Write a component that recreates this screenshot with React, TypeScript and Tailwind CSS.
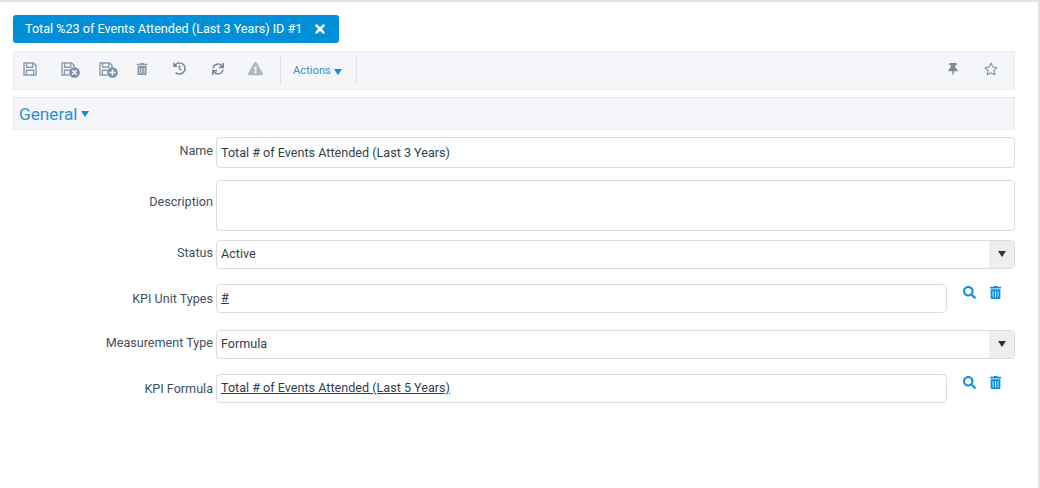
import type { JSX, ReactNode } from 'react';
import {
    FaExclamationTriangle,
    FaHistory,
    FaRegStar,
    FaSearch,
    FaSync,
    FaThumbtack,
    FaTimes,
    FaTimesCircle,
    FaPlusCircle,
    FaTrashAlt,
} from 'react-icons/fa';

function Floppy(): JSX.Element {
    return (
        <svg viewBox="0 0 14 14" className="block h-[14px] w-[14px]" fill="none" stroke="currentColor" strokeWidth="1.4">
            <path d="M1 1H10.6L13 3.4V13H1Z" />
            <path d="M3.6 1V5.2H9.8V1" />
            <path d="M3.4 13V8.2H10.6V13" />
        </svg>
    );
}

function Triangle({ className }: { className: string }): JSX.Element {
    return (
        <svg viewBox="0 0 8 6" className={`block h-[6px] w-[8px] ${className}`} fill="currentColor">
            <path d="M0 0H8L4 6Z" />
        </svg>
    );
}

function SaveBadge({ children }: { children: ReactNode }): JSX.Element {
    return (
        <span className="relative block h-[14px] w-[14px] text-[#8b9db0]">
            <Floppy />
            <span className="absolute left-[8px] top-[5px] rounded-full bg-[#f4f6fa] text-[11px] text-[#7f91a3]">{children}</span>
        </span>
    );
}

function Row({ label, top, children, className }: { label: string; top: string; children: ReactNode; className: string }): JSX.Element {
    return (
        <div className={`flex ${className}`}>
            <label className={`w-[200px] shrink-0 text-right text-[12.6px] leading-[18px] text-[#44505c] ${top}`}>{label}</label>
            <div className="ml-[3px] flex min-w-0 flex-1">{children}</div>
        </div>
    );
}

function TextBox({ value, underline, className }: { value?: string; underline?: boolean; className: string }): JSX.Element {
    return (
        <div className={`flex-1 rounded-[4px] border border-[#dcdcdc] bg-white pl-[4px] text-[12.6px] leading-[18px] text-[#333f4b] ${className}`}>
            {underline ? <span className="underline">{value}</span> : value}
        </div>
    );
}

function SelectBox({ value }: { value: string }): JSX.Element {
    return (
        <div className="flex h-[29px] flex-1 overflow-hidden rounded-[4px] border border-[#dcdcdc] bg-white">
            <div className="flex-1 pl-[4px] pt-[4px] text-[12.6px] leading-[18px] text-[#333f4b]">{value}</div>
            <div className="flex w-[25px] items-center justify-center bg-[#eeeeee] text-[#333]">
                <Triangle className="mb-[1px] text-[#333]" />
            </div>
        </div>
    );
}

function LookupBox({ value }: { value: string }): JSX.Element {
    return (
        <>
            <TextBox value={value} underline className="h-[29px] pt-[4px]" />
            <div className="flex w-[68px] shrink-0 items-start pl-[16px] pt-[1px] text-[#0f8fd8]">
                <FaSearch className="mt-[1px] text-[13px]" />
                <FaTrashAlt className="ml-[13px] mt-[1px] text-[13px]" />
            </div>
        </>
    );
}

export default function App(): JSX.Element {
    return (
        <div className="h-[488px] w-[1040px] overflow-hidden border-r-2 border-t-2 border-[#e4e4e6] bg-white pl-[13px] pr-[23px] pt-[13px] font-['Roboto',sans-serif]">
            <div className="flex h-[28px] w-[326px] items-center rounded-[3px] bg-[#0090d9] pl-[12px] text-[12.6px] text-white">
                <span>Total %23 of Events Attended (Last 3 Years) ID #1</span>
                <FaTimes className="ml-[11px] text-[14px]" />
            </div>

            <div className="mt-[8px] flex h-[39px] items-center border border-[#ebedf0] bg-[#f4f6fa] text-[#7c8b9a]">
                <div className="mb-[4px] flex items-center pl-[9px]">
                    <span className="text-[#8b9db0]"><Floppy /></span>
                    <div className="ml-[24px]">
                        <SaveBadge><FaTimesCircle /></SaveBadge>
                    </div>
                    <div className="ml-[24px]">
                        <SaveBadge><FaPlusCircle /></SaveBadge>
                    </div>
                    <FaTrashAlt className="ml-[23px] text-[12px] text-[#8896a4]" />
                    <FaHistory className="ml-[25px] text-[13px]" />
                    <FaSync className="ml-[26px] text-[12px]" />
                    <FaExclamationTriangle className="ml-[24px] text-[15px] text-[#adb8c3]" />
                </div>
                <div className="ml-[17px] flex h-[28px] items-center border-x border-[#e1e3e6] pl-[12px] pr-[14px] pt-[2px] text-[11.2px] text-[#3d8fce]">
                    Actions
                    <Triangle className="ml-[3px] text-[#0f8fd8]" />
                </div>
                <div className="mb-[4px] ml-auto flex items-center pr-[16px]">
                    <FaThumbtack className="text-[12px] text-[#7c8b9a]" />
                    <FaRegStar className="ml-[25px] text-[14px] text-[#7f95ab]" />
                </div>
            </div>

            <div className="mt-[7px] flex h-[33px] items-center border border-[#ebedf0] bg-[#f4f6fa] pl-[5px] pt-[2px] text-[17.2px] text-[#2f8fd0]">
                General
                <Triangle className="mb-[2px] ml-[4px] text-[#0f8fd8]" />
            </div>

            <Row label="Name" top="pt-[5px]" className="mt-[7px]">
                <TextBox value="Total # of Events Attended (Last 3 Years)" className="h-[31px] pt-[6px]" />
            </Row>
            <Row label="Description" top="pt-[13px]" className="mt-[12px]">
                <div className="h-[51px] flex-1 rounded-[4px] border border-[#dcdcdc] bg-white" />
            </Row>
            <Row label="Status" top="pt-[4px]" className="mt-[9px]">
                <SelectBox value="Active" />
            </Row>
            <Row label="KPI Unit Types" top="pt-[6px]" className="mt-[15px]">
                <LookupBox value="#" />
            </Row>
            <Row label="Measurement Type" top="pt-[4px]" className="mt-[17px]">
                <SelectBox value="Formula" />
            </Row>
            <Row label="KPI Formula" top="pt-[6px]" className="mt-[15px]">
                <LookupBox value="Total # of Events Attended (Last 5 Years)" />
            </Row>
        </div>
    );
}
